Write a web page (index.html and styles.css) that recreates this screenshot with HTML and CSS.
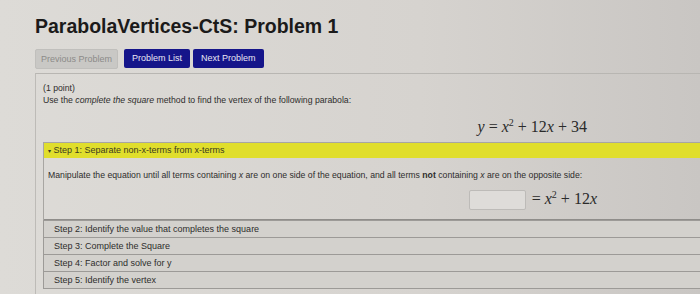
FILE: index.html
```html
<!DOCTYPE html>
<html>
<head>
	<title>ParabolaVertices-CtS: Problem 1</title>
	<link rel="stylesheet" href="styles.css">
</head>
<body>
	<h1>ParabolaVertices-CtS: Problem 1</h1>
	<!-- navigation between problems -->
	<div id="nav">
		<span class="btn disabled">Previous Problem</span>
		<span class="btn">Problem List</span>
		<span class="btn">Next Problem</span>
	</div>
	<!-- the problem itself -->
	<div id="problem">
		<div class="points">(1 point)</div>
		<div>Use the <i>complete the square</i> method to find the vertex of the following parabola:</div>
		<div class="math display"><i>y</i> = <i>x</i><sup>2</sup> + 12<i>x</i> + 34</div>

		<div class="step open">
			<div class="step_title"><span class="arrow">&#9662;</span> Step 1: Separate non-x-terms from x-terms</div>
			<div class="step_body">
				<div>Manipulate the equation until all terms containing <i>x</i> are on one side of the equation, and all terms <b>not</b> containing <i>x</i> are on the opposite side:</div>
				<div class="math answer"><input type="text"> = <i>x</i><sup>2</sup> + 12<i>x</i></div>
			</div>
		</div>
		<div class="step">Step 2: Identify the value that completes the square</div>
		<div class="step">Step 3: Complete the Square</div>
		<div class="step">Step 4: Factor and solve for y</div>
		<div class="step">Step 5: Identify the vertex</div>
	</div>
</body>
</html>
```

FILE: styles.css
```css
body{
	margin: 0;
	padding: 0 0 0 35px;
	font-family: "Liberation Sans", Arial, sans-serif;
	font-size: 8.7px;
	color: #2e2d2c;
	background: linear-gradient(to right, #dddbd7, #d6d3cf 60%, #c9c6c3);
	height: 294px;
	overflow: hidden;
}
h1{
	margin: 0;
	padding-top: 15px;
	font-size: 19.5px;
	color: #1b1a1a;
	height: 49px;
	box-sizing: border-box;
}
#nav{
	display: flex;
	gap: 3px;
	height: 24px;
}
.btn{
	display: block;
	height: 19px;
	line-height: 19px;
	padding: 0 8px;
	background-color: #15158a;
	color: #e8e8f4;
	border-radius: 2px;
	font-size: 9px;
}
.disabled{
	background-color: #c9c8c5;
	color: #8c8b89;
	border: 1px solid #c0bfbc;
	height: 18px;
	line-height: 18px;
	padding: 0 5px;
	margin-right: 3px;
}
#problem{
	border-top: 1px solid #b8b6b2;
	border-left: 1px solid #bdbbb7;
	padding: 8px 0 6px 7px;
	line-height: 12px;
}
.math{
	font-family: "Liberation Serif", "Times New Roman", serif;
	font-size: 16px;
	color: #2a2a2a;
}
sup{
	font-size: 10px;
	line-height: 0;
}
.display{
	text-align: right;
	padding: 15px 113px 9px 0;
}
.step{
	border: 1px solid #9c9a97;
	border-right: none;
	height: 18px;
	line-height: 17px;
	padding-left: 10px;
	box-sizing: border-box;
	background-color: #d3d1cd;
	margin-top: -1px;
	font-size: 9px;
}
.step.open{
	height: auto;
	padding: 0;
	border-color: #a8a6a2;
	background: none;
	margin-top: 0;
}
.step_title{
	background-color: #e0de2c;
	height: 15px;
	line-height: 15px;
	padding-left: 4px;
	font-size: 9px;
	color: #3a3a20;
}
.arrow{
	font-size: 6px;
}
.step_body{
	padding: 9px 0 0 4px;
	height: 52px;
	border-bottom: 1px solid #8f8d8a;
	font-size: 8.7px;
}
.answer{
	text-align: right;
	padding: 6px 103px 0 0;
}
input{
	width: 57px;
	height: 20px;
	box-sizing: border-box;
	border: 1px solid #bdbbb8;
	background-color: #dedcd9;
	border-radius: 2px;
	vertical-align: middle;
	margin-right: 2px;
}
```
